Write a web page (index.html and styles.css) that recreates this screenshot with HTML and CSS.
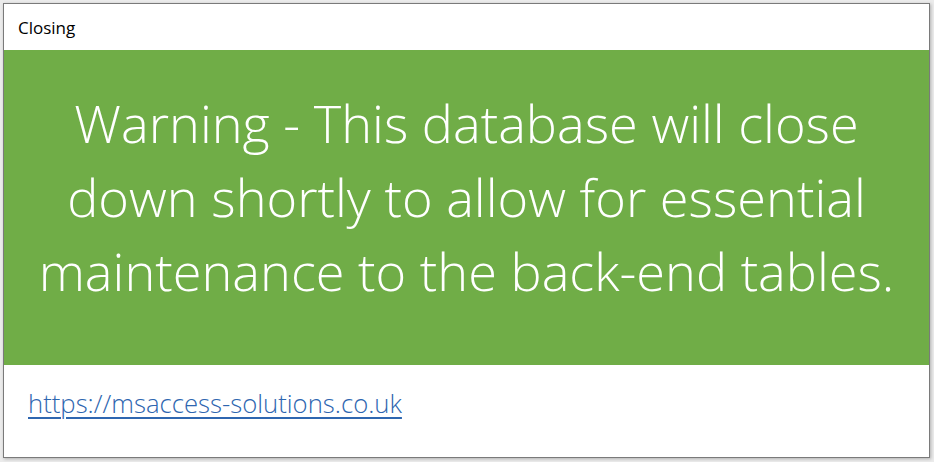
FILE: index.html
```html
<!DOCTYPE html>
<html>
<head>
<meta charset="utf-8">
<link rel="stylesheet" href="styles.css">
</head>
<body>
<div class="window">
  <div class="titlebar">Closing</div>
  <div class="banner">
    <p class="message">Warning - This database will close <br>down shortly to allow for essential <br>maintenance to the back-end tables.</p>
  </div>
  <div class="footer">
    <a class="link" href="#">https://msaccess-solutions.co.uk</a>
  </div>
</div>
</body>
</html>
```
FILE: styles.css
```css
html, body {
  margin: 0;
  padding: 0;
  background: #ebebeb;
  width: 934px;
  height: 462px;
  overflow: hidden;
}
body {
  padding: 3px 0 0 3px;
  box-sizing: border-box;
  font-family: "Open Sans", "Liberation Sans", sans-serif;
}
.window {
  width: 927px;
  height: 455px;
  box-sizing: border-box;
  border: 1px solid #7a7a7a;
  background: #ffffff;
  box-shadow: 1px 1px 3px rgba(0,0,0,0.25);
  display: flex;
  flex-direction: column;
}
.titlebar {
  height: 46px;
  box-sizing: border-box;
  padding: 12px 0 0 14px;
  font-size: 17px;
  line-height: normal;
  color: #000;
}
.banner {
  height: 315px;
  box-sizing: border-box;
  padding-top: 36px;
  background: #70ad47;
  display: flex;
  justify-content: center;
}
.message {
  margin: 0;
  color: #ffffff;
  font-weight: 300;
  font-size: 52.3px;
  line-height: 74px;
  text-align: center;
  white-space: nowrap;
}
.footer {
  padding: 21px 0 0 24px;
  font-size: 25.7px;
  line-height: normal;
}
.link {
  font-size: 25.7px;
  font-weight: 300;
  color: #2e66b0;
  text-decoration: underline;
  text-decoration-thickness: 2px;
  text-underline-offset: 4px;
}
```
